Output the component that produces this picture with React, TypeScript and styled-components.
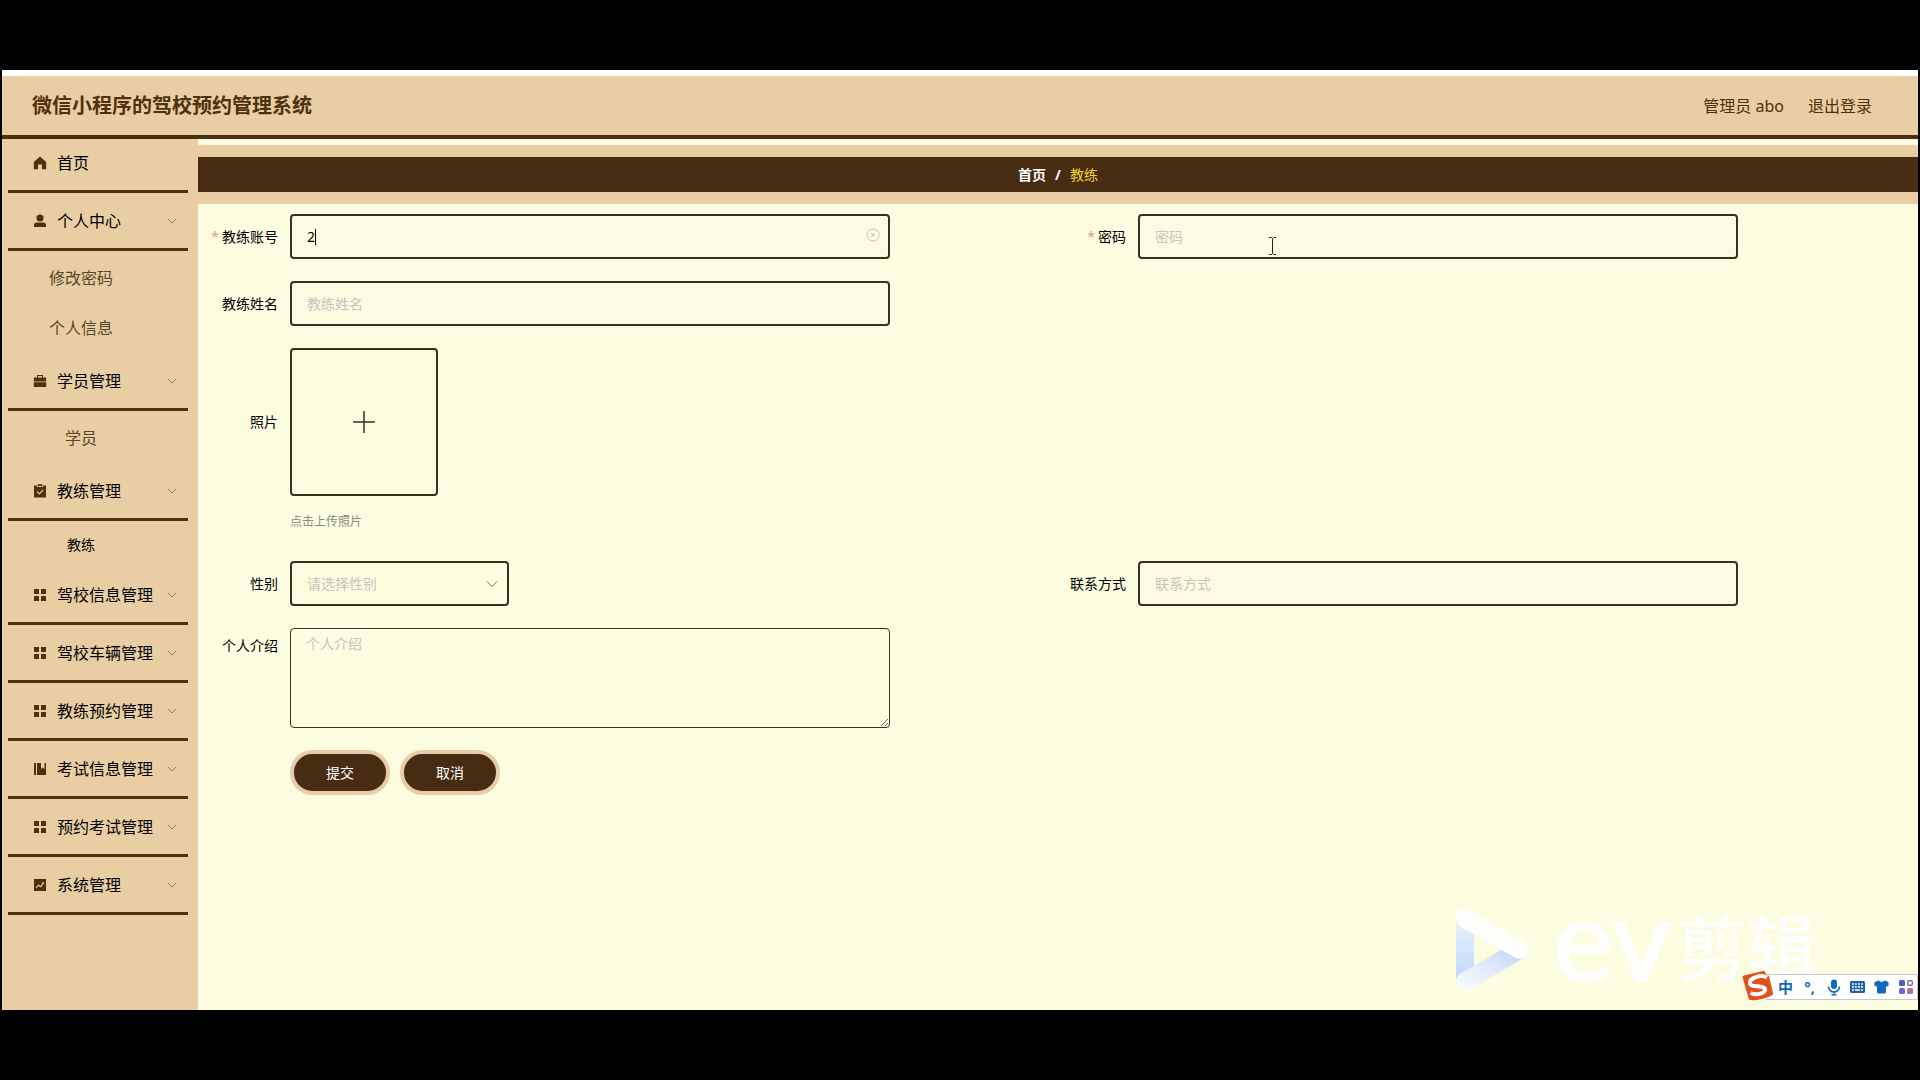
import React, { useState } from "react";
import styled, { createGlobalStyle } from "styled-components";

const color = {
  tan: "#e9cea4",
  brown: "#472c12",
  line: "#50300e",
  page: "#fcfce1",
  field: "#3b301c",
  hint: "#c5c6bd",
};

const GlobalStyle = createGlobalStyle`
  * { box-sizing: border-box; }
  body {
    margin: 0;
    background: #000;
    font-family: "Noto Sans", "Noto Sans CJK SC", sans-serif;
    font-size: 14px;
    color: #000;
  }
  button, input, select, textarea { font: inherit; }
  ul { margin: 0; padding: 0; list-style: none; }
  a { color: inherit; text-decoration: none; }
`;

const Stage = styled.div`
  min-height: 100vh;
  padding: 70px 2px;
  display: flex;
`;

const Screen = styled.div`
  position: relative;
  flex: 1;
  display: flex;
  flex-direction: column;
  border-top: 6px solid #fff;
  background: ${color.page};
  overflow: hidden;
`;

const Header = styled.header`
  position: relative;
  z-index: 1;
  display: flex;
  align-items: center;
  justify-content: space-between;
  height: 59px;
  padding: 1px 46px 0 30px;
  background: ${color.tan};
  color: ${color.line};
  box-shadow: 0 4px 0 #48300f;
`;

const Title = styled.h1`
  margin: 0;
  font-size: 20px;
  line-height: 28px;
  font-weight: 700;
`;

const Account = styled.div`
  display: flex;
  gap: 24px;
  font-size: 16px;
  line-height: 24px;
`;

const Body = styled.div`
  flex: 1;
  display: flex;
`;

const Sidebar = styled.nav`
  flex: 0 0 196px;
  padding: 0 10px 0 6px;
  background: ${color.tan};
`;

const MenuButton = styled.button`
  display: flex;
  align-items: center;
  width: 100%;
  height: 58px;
  padding: 0 10px 0 24px;
  border: 0;
  border-bottom: 3px solid ${color.line};
  background: none;
  color: #000;
  font-size: 16px;
  line-height: 24px;
  text-align: left;
`;

const MenuIcon = styled.svg`
  flex: none;
  width: 16px;
  height: 16px;
  margin-right: 9px;
  color: ${color.line};
`;

const MenuText = styled.span`
  flex: 1;
  white-space: nowrap;
`;

const Chevron = styled.svg<{ $size: number; $tone: string }>`
  flex: none;
  width: ${(p) => p.$size}px;
  height: ${(p) => p.$size}px;
  fill: none;
  stroke: ${(p) => p.$tone};
`;

const SubMenu = styled.ul`
  padding: 1px 0;
`;

const SubLink = styled.a<{ $active?: boolean }>`
  display: flex;
  align-items: center;
  justify-content: center;
  height: ${(p) => (p.$active ? 44 : 50)}px;
  padding-right: 34px;
  font-size: ${(p) => (p.$active ? 14 : 16)}px;
  color: ${(p) => (p.$active ? "#000" : "#5a452a")};
`;

const Main = styled.main`
  flex: 1;
  min-width: 0;
  padding-top: 10px;
`;

const Breadcrumb = styled.nav`
  display: flex;
  align-items: center;
  justify-content: center;
  gap: 9px;
  height: 59px;
  border: solid ${color.tan};
  border-width: 12px 0;
  background: ${color.brown};
  color: #fff;
  font-weight: 700;
  line-height: 20px;
`;

const Current = styled.span`
  color: #f2cf2c;
  font-weight: 400;
`;

const Form = styled.form`
  display: grid;
  grid-template-columns: 1fr 1fr;
  row-gap: 22px;
  padding: 10px 12px;
`;

const Field = styled.div<{ $wide?: boolean }>`
  display: flex;
  align-items: flex-start;
  grid-column: ${(p) => (p.$wide ? "1 / -1" : "auto")};
`;

const Label = styled.label<{ $height?: number }>`
  flex: 0 0 80px;
  padding-right: 12px;
  line-height: ${(p) => p.$height ?? 45}px;
  text-align: right;
  white-space: nowrap;
`;

const Star = styled.span`
  margin-right: 3px;
  color: #e39a86;
`;

const Control = styled.div`
  position: relative;
  flex: 0 1 600px;
  min-width: 0;
`;

const TextInput = styled.input`
  display: block;
  width: 100%;
  height: 45px;
  padding: 0 15px;
  border: 2px solid ${color.field};
  border-radius: 4px;
  background: #fdfae1;
  color: #000;
  outline: none;
  &::placeholder { color: ${color.hint}; opacity: 1; }
`;

const Caret = styled.span`
  position: absolute;
  left: 25px;
  top: 15px;
  width: 1px;
  height: 16px;
  background: #000;
`;

const ClearButton = styled.button`
  position: absolute;
  right: 10px;
  top: 14px;
  display: flex;
  width: 14px;
  height: 14px;
  padding: 0;
  border: 0;
  background: none;
  color: #c6c5b8;
`;

const Pointer = styled.svg`
  position: absolute;
  left: 130px;
  top: 23px;
  width: 9px;
  height: 18px;
  fill: none;
  stroke: #222;
`;

const Picker = styled.div`
  position: relative;
  width: 219px;
  display: flex;
  align-items: center;
`;

const Select = styled.select`
  width: 100%;
  height: 45px;
  padding: 0 15px;
  border: 2px solid ${color.field};
  border-radius: 4px;
  background: transparent;
  color: ${color.hint};
  appearance: none;
  outline: none;
`;

const PickerArrow = styled.span`
  position: absolute;
  right: 10px;
  display: flex;
  pointer-events: none;
`;

const UploadBox = styled.button`
  display: flex;
  align-items: center;
  justify-content: center;
  width: 148px;
  height: 148px;
  padding: 0;
  border: 2px solid ${color.field};
  border-radius: 4px;
  background: transparent;
  color: ${color.field};
`;

const Tip = styled.p`
  margin: 16px 0 7px;
  font-size: 12px;
  line-height: 20px;
  color: #8a8b80;
`;

const TextArea = styled.textarea`
  display: block;
  width: 100%;
  height: 100px;
  padding: 5px 15px;
  border: 1px solid ${color.field};
  border-radius: 4px;
  background: transparent;
  line-height: 20px;
  outline: none;
  resize: vertical;
  &::placeholder { color: ${color.hint}; opacity: 1; }
`;

const Actions = styled.div`
  display: flex;
  gap: 10px;
  grid-column: 1 / -1;
  padding-left: 80px;
`;

const ActionButton = styled.button`
  width: 100px;
  height: 45px;
  padding: 0;
  border: 4px solid #e6cda8;
  border-radius: 23px;
  background: ${color.brown};
  color: #fff;
  line-height: 36px;
`;

const Watermark = styled.div`
  position: absolute;
  right: 101px;
  bottom: 16px;
  display: flex;
  align-items: center;
  height: 88px;
  color: #fff;
  opacity: 0.95;
  pointer-events: none;
`;

const WatermarkLogo = styled.svg`
  width: 74px;
  height: 84px;
  margin-right: 24px;
`;

const WatermarkLatin = styled.span`
  font-family: Lato, sans-serif;
  font-size: 114px;
  line-height: 72px;
  padding-bottom: 26px;
  -webkit-text-stroke: 2px #fff;
`;

const WatermarkHan = styled.span`
  margin-left: 6px;
  padding-bottom: 4px;
  font-size: 70px;
  line-height: 64px;
  font-weight: 500;
`;

const ImeBar = styled.div`
  position: absolute;
  right: 0;
  bottom: 10px;
  display: flex;
  align-items: center;
  gap: 9px;
  height: 26px;
  padding: 0 4px 0 12px;
  border: 1px solid #c6c6d4;
  border-left: 0;
  background: #fff;
  color: #1467c0;
  font-size: 15px;
  line-height: 20px;
  font-weight: 700;
`;

const ImeLogo = styled.svg`
  position: absolute;
  left: -24px;
  top: -5px;
  width: 32px;
  height: 31px;
`;

const ImeItem = styled.span`
  display: flex;
  align-items: center;
  justify-content: center;
  width: 15px;
  height: 20px;
  white-space: nowrap;
`;

type IconName = "home" | "user" | "case" | "claim" | "grid" | "book" | "chart";

const shapes: Record<IconName, React.ReactNode> = {
  home: <path d="M8 1.6 14.2 7v7.2H10V9.4H6v4.8H1.8V7z" fill="currentColor" />,
  user: (
    <g fill="currentColor">
      <circle cx="8" cy="4.9" r="3.5" />
      <path d="M2 14V12a2.6 2.6 0 0 1 2.6-2.6h6.8A2.6 2.6 0 0 1 14 12v2z" />
    </g>
  ),
  case: (
    <g fill="currentColor">
      <path d="M5 2h6v2.6h2.6c.3 0 .6.3.6.6v3.2H1.8V5.2c0-.3.3-.6.6-.6H5zm1 1v1.6h4V3z" fillRule="evenodd" />
      <path d="M1.8 9.2h12.4v4.3c0 .3-.3.6-.6.6H2.4c-.3 0-.6-.3-.6-.6z" />
    </g>
  ),
  claim: (
    <>
      <path d="M2 2.6h2.8V4h6.4V2.6H14v12H2z" fill="currentColor" />
      <path d="M5.6 1.3h4.8v1.9H5.6z" fill="currentColor" />
      <path d="m5 8.7 2.3 2.3 4-4.2" fill="none" stroke={color.tan} strokeWidth="1.2" />
    </>
  ),
  grid: (
    <path d="M2 2h5v5H2zM9 2h5v5H9zM2 9h5v5H2zM9 9h5v5H9z" fill="currentColor" />
  ),
  book: (
    <path d="M2 2h2v12H2zM5 2h4v6l1.8-1.5L12.5 8V2H14v12H5z" fill="currentColor" />
  ),
  chart: (
    <>
      <path d="M2 2h12v12H2z" fill="currentColor" />
      <path d="m4 10.8 2.6-2.6 2.2 1.5 3-4M10 5.7h2" fill="none" stroke={color.tan} strokeWidth="1.1" />
    </>
  ),
};

function Icon({ name }: { name: IconName }) {
  return (
    <MenuIcon viewBox="0 0 16 16" aria-hidden="true">
      {shapes[name]}
    </MenuIcon>
  );
}

interface MenuEntry {
  icon: IconName;
  text: string;
  leaf?: boolean;
  children?: { text: string; active?: boolean }[];
}

const menu: MenuEntry[] = [
  { icon: "home", text: "首页", leaf: true },
  { icon: "user", text: "个人中心", children: [{ text: "修改密码" }, { text: "个人信息" }] },
  { icon: "case", text: "学员管理", children: [{ text: "学员" }] },
  { icon: "claim", text: "教练管理", children: [{ text: "教练", active: true }] },
  { icon: "grid", text: "驾校信息管理" },
  { icon: "grid", text: "驾校车辆管理" },
  { icon: "grid", text: "教练预约管理" },
  { icon: "book", text: "考试信息管理" },
  { icon: "grid", text: "预约考试管理" },
  { icon: "chart", text: "系统管理" },
];

function SideMenu() {
  return (
    <Sidebar>
      <ul>
        {menu.map((entry) => (
          <li key={entry.text}>
            <MenuButton type="button">
              <Icon name={entry.icon} />
              <MenuText>{entry.text}</MenuText>
              {!entry.leaf && (
                <Chevron $size={12} $tone="#91765a" viewBox="0 0 12 12" aria-hidden="true">
                  <path d="m2 4 4 4 4-4" />
                </Chevron>
              )}
            </MenuButton>
            {entry.children && (
              <SubMenu>
                {entry.children.map((child) => (
                  <li key={child.text}>
                    <SubLink href="#" $active={child.active}>{child.text}</SubLink>
                  </li>
                ))}
              </SubMenu>
            )}
          </li>
        ))}
      </ul>
    </Sidebar>
  );
}

function CoachForm() {
  const [account, setAccount] = useState("2");
  return (
    <Form onSubmit={(e) => e.preventDefault()}>
      <Field>
        <Label htmlFor="account"><Star>*</Star>教练账号</Label>
        <Control>
          <TextInput id="account" value={account} onChange={(e) => setAccount(e.target.value)} />
          <Caret />
          <ClearButton type="button" aria-label="清空" onClick={() => setAccount("")}>
            <svg width="14" height="14" viewBox="0 0 14 14" fill="none" stroke="currentColor">
              <circle cx="7" cy="7" r="6" />
              <path d="m5 5 4 4M9 5 5 9" />
            </svg>
          </ClearButton>
        </Control>
      </Field>
      <Field>
        <Label htmlFor="password"><Star>*</Star>密码</Label>
        <Control>
          <TextInput id="password" type="password" placeholder="密码" />
          <Pointer viewBox="0 0 9 18" aria-hidden="true">
            <path d="M1 .5h2.5l1 1 1-1H8M4.5 1.5v15M1 17.5h2.5l1-1 1 1H8" />
          </Pointer>
        </Control>
      </Field>
      <Field $wide>
        <Label htmlFor="name">教练姓名</Label>
        <Control><TextInput id="name" placeholder="教练姓名" /></Control>
      </Field>
      <Field $wide>
        <Label htmlFor="photo" $height={148}>照片</Label>
        <Control>
          <UploadBox id="photo" type="button">
            <svg width="24" height="24" viewBox="0 0 24 24" stroke="currentColor" strokeWidth="1.5">
              <path d="M12 1v22M1 12h22" />
            </svg>
          </UploadBox>
          <Tip>点击上传照片</Tip>
        </Control>
      </Field>
      <Field>
        <Label htmlFor="gender">性别</Label>
        <Picker>
          <Select id="gender" defaultValue="">
            <option value="">请选择性别</option>
            <option value="男">男</option>
            <option value="女">女</option>
          </Select>
          <PickerArrow>
            <Chevron $size={14} $tone="#6b6853" viewBox="0 0 14 14" aria-hidden="true">
              <path d="m2 4.5 5 5 5-5" />
            </Chevron>
          </PickerArrow>
        </Picker>
      </Field>
      <Field>
        <Label htmlFor="contact">联系方式</Label>
        <Control><TextInput id="contact" placeholder="联系方式" /></Control>
      </Field>
      <Field $wide>
        <Label htmlFor="intro" $height={36}>个人介绍</Label>
        <Control><TextArea id="intro" placeholder="个人介绍" /></Control>
      </Field>
      <Actions>
        <ActionButton type="submit">提交</ActionButton>
        <ActionButton type="button">取消</ActionButton>
      </Actions>
    </Form>
  );
}

function VideoMark() {
  return (
    <Watermark>
      <WatermarkLogo viewBox="0 0 74 84" aria-hidden="true">
        <defs>
          <linearGradient id="side" x1="0" y1="0" x2="0" y2="1">
            <stop offset="0" stopColor="#eaf1ff" />
            <stop offset="1" stopColor="#bcd4ff" />
          </linearGradient>
          <linearGradient id="foot" x1="0" y1="1" x2="1" y2="0">
            <stop offset="0" stopColor="#fbfcff" />
            <stop offset=".5" stopColor="#e2ebff" />
            <stop offset="1" stopColor="#bcd2fb" />
          </linearGradient>
        </defs>
        <path d="M1 10h18v56L1 76z" fill="url(#side)" />
        <path d="M67 51 14 82C8 84 1 80 1 73c0-4 2-6 5-8l42-24z" fill="url(#foot)" />
        <path d="M1 10C1 3 8-1 14 2l54 31c4 2 6 6 5 10-1 7-7 9-12 7L6 19c-3-2-5-5-5-9z" fill="#fff" />
      </WatermarkLogo>
      <WatermarkLatin>ev</WatermarkLatin>
      <WatermarkHan>剪辑</WatermarkHan>
    </Watermark>
  );
}

function InputMethodBar() {
  return (
    <ImeBar>
      <ImeLogo viewBox="0 0 32 31" aria-hidden="true">
        <path d="M2 5.5 21 1c1-.2 2 .2 2.3 1.2l.7 2.3 3 1.5 4 17c.3 1-.3 2-1.300 2.400C24 28 15 31 8.500 30c-1.200-.2-1.800-1-2-2L.6 7.500C.3 6.500 1 5.700 2 5.500z" fill="#e2521f" />
        <path d="M25 7.500C19 4 7 8 8 13.500c.8 4.500 14 1 15 5.500.8 4-8 7-14.500 4" fill="none" stroke="#fff" strokeWidth="4" />
      </ImeLogo>
      <ImeItem>中</ImeItem>
      <ImeItem>°,</ImeItem>
      <ImeItem>
        <svg width="14" height="17" viewBox="0 0 14 17" fill="none" stroke="currentColor" strokeWidth="1.6">
          <rect x="4" y="0.5" width="6" height="9.5" rx="3" fill="currentColor" stroke="none" />
          <path d="M1.5 7.5a5.5 5.5 0 0 0 11 0M7 13v1.5M4.5 15.8h5" />
        </svg>
      </ImeItem>
      <ImeItem>
        <svg width="15" height="12" viewBox="0 0 15 12">
          <rect width="15" height="12" rx="1.5" fill="#1d62a6" />
          <path d="M2 3h11M2 5.8h11" stroke="#fff" strokeWidth="1.7" strokeDasharray="1.8 1.2" />
          <path d="M2 9h2M5 9h5M11 9h2" stroke="#fff" strokeWidth="1.5" />
        </svg>
      </ImeItem>
      <ImeItem>
        <svg width="16" height="14" viewBox="0 0 16 14" fill="currentColor">
          <path d="M5 0c1 1.8 5 1.8 6 0l1.5.3L15.5 2v4l-2.7.5V12c0 1-.8 2-1.8 2H5c-1 0-1.8-1-1.8-2V6.500L.5 6V2L3.500.3z" />
        </svg>
      </ImeItem>
      <ImeItem>
        <svg width="14" height="14" viewBox="0 0 14 14">
          <rect width="6" height="6" rx="1.5" fill="#4f62bd" />
          <rect x="8.7" y=".7" width="4.6" height="4.6" rx="1.2" fill="none" stroke="#7668b0" strokeWidth="1.4" />
          <rect y="8" width="6" height="6" rx="1.5" fill="#7a63d8" />
          <rect x="8" y="8" width="6" height="6" rx="1.5" fill="#b0739a" />
        </svg>
      </ImeItem>
    </ImeBar>
  );
}

export default function App() {
  return (
    <>
      <GlobalStyle />
      <Stage>
        <Screen>
          <Header>
            <Title>微信小程序的驾校预约管理系统</Title>
            <Account>
              <span>管理员 abo</span>
              <a href="#">退出登录</a>
            </Account>
          </Header>
          <Body>
            <SideMenu />
            <Main>
              <Breadcrumb>
                <a href="#">首页</a>
                <span>/</span>
                <Current>教练</Current>
              </Breadcrumb>
              <CoachForm />
            </Main>
          </Body>
          <VideoMark />
          <InputMethodBar />
        </Screen>
      </Stage>
    </>
  );
}
